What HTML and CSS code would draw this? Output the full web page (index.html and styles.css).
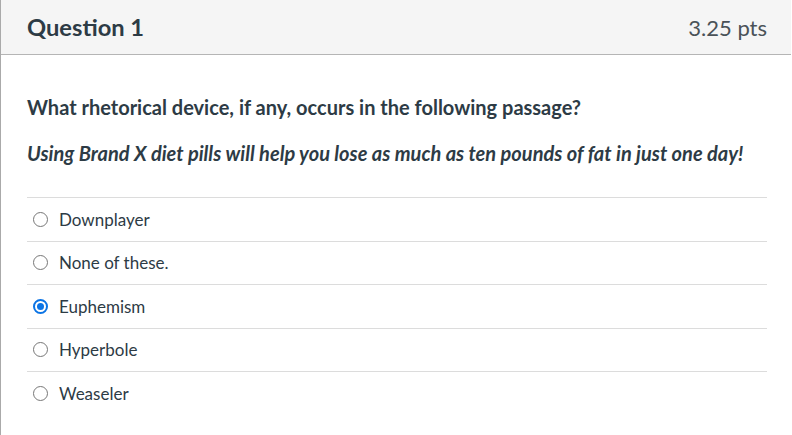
FILE: index.html
```html
<!DOCTYPE html>
<html>
<head>
<meta charset="utf-8">
<link rel="stylesheet" href="styles.css">
</head>
<body>
<div class="question">
  <div class="header">
    <h2 class="title">Question 1</h2>
    <span class="pts">3.25 pts</span>
  </div>
  <div class="body">
    <p class="prompt">What rhetorical device, if any, occurs in the following passage?</p>
    <p class="passage">Using Brand X diet pills will help you lose as much as ten pounds of fat in just one day!</p>
    <div class="answers">
      <label class="answer"><span class="radio"></span><span class="label">Downplayer</span></label>
      <label class="answer"><span class="radio"></span><span class="label">None of these.</span></label>
      <label class="answer"><span class="radio checked"></span><span class="label">Euphemism</span></label>
      <label class="answer"><span class="radio"></span><span class="label">Hyperbole</span></label>
      <label class="answer"><span class="radio"></span><span class="label">Weaseler</span></label>
    </div>
  </div>
</div>
</body>
</html>
```

FILE: styles.css
```css
html, body {
  margin: 0;
  padding: 0;
  background: #fff;
}
body {
  font-family: Lato, "Open Sans", sans-serif;
  color: #2d3b45;
}
.question {
  width: 791px;
  border-left: 1px solid #aaaaaa;
  min-height: 435px;
  box-sizing: border-box;
}
.header {
  height: 54px;
  background: #f5f5f5;
  border-bottom: 1px solid #b5b5b5;
  display: flex;
  align-items: center;
  justify-content: space-between;
  padding: 0 24px 0 26px;
}
.title {
  margin: 0;
  font-size: 23.7px;
  font-weight: 700;
  color: #2d3b45;
}
.pts {
  font-size: 22px;
  font-weight: 400;
  color: #4a5258;
}
.body {
  padding: 0 24px 0 26px;
}
.prompt {
  margin: 0;
  padding-top: 39px;
  font-size: 20px;
  font-weight: 700;
  line-height: 26px;
}
.passage {
  margin: 20px 0 0;
  font-size: 20px;
  font-weight: 700;
  font-style: italic;
  line-height: 26px;
}
.answers {
  margin-top: 31px;
}
.answer {
  display: flex;
  align-items: center;
  height: 42.5px;
  border-top: 1px solid #dcdcdc;
  font-size: 17px;
  padding-left: 6px;
}
.radio {
  width: 13px;
  height: 13px;
  border: 1px solid #777;
  border-radius: 50%;
  margin-right: 11px;
  box-sizing: content-box;
  position: relative;
}
.radio.checked {
  border: 2px solid #0b74e5;
  width: 11px;
  height: 11px;
}
.radio.checked::after {
  content: "";
  position: absolute;
  left: 2px;
  top: 2px;
  width: 7px;
  height: 7px;
  border-radius: 50%;
  background: #0b74e5;
}
```
